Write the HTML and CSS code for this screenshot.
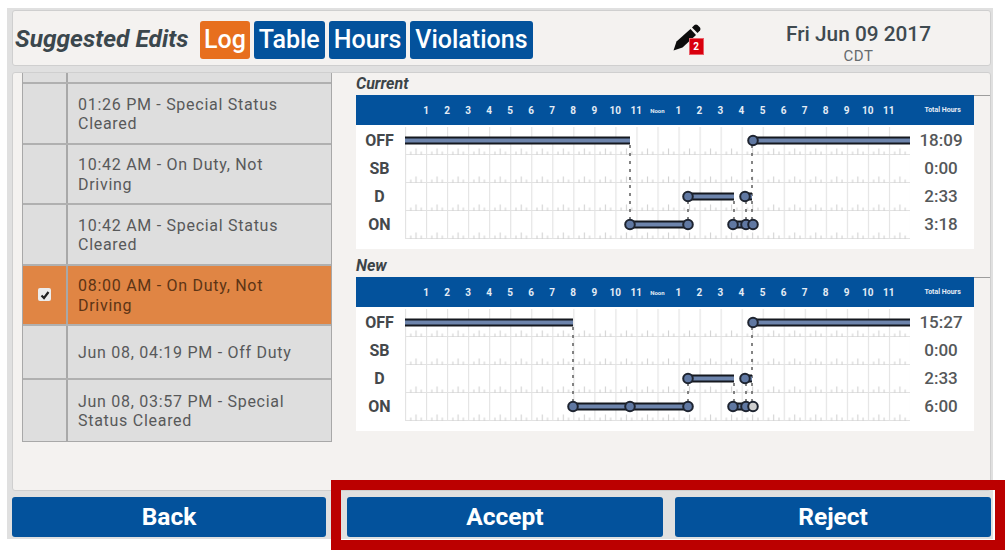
FILE: index.html
```html
<!DOCTYPE html>
<html lang="en">
<head>
<meta charset="utf-8">
<title>Suggested Edits</title>
<link rel="stylesheet" href="styles.css">
</head>
<body>
<div class="app">
  <header class="panel top">
    <h1 class="title">Suggested Edits</h1>
    <nav class="tabs">
      <span class="tab active">Log</span>
      <span class="tab table">Table</span>
      <span class="tab wide">Hours</span>
      <span class="tab wide">Violations</span>
    </nav>
    <div class="edit-icon">
      <svg width="30" height="30" viewBox="0 0 30 30">
        <path class="pencil-body" d="M1.5 27.5 L4.5 18.5 L18.5 6 L24 12 L10.5 24.5 Z"/>
        <path class="pencil-cap" d="M20 4.5 L22.5 2 Q24 1 25.5 2 L28 4.5 Q29 6 28 7.5 L25.5 10 Z"/>
      </svg>
      <span class="badge">2</span>
    </div>
    <div class="date">
      <div class="date-main">Fri Jun 09 2017</div>
      <div class="date-zone">CDT</div>
    </div>
  </header>

  <main class="panel content">
    <div class="list">
      <div class="row stub"><div class="check"></div><div class="text"></div></div>
      <div class="row"><div class="check"></div><div class="text">01:26 PM - Special Status Cleared</div></div>
      <div class="row"><div class="check"></div><div class="text">10:42 AM - On Duty, Not Driving</div></div>
      <div class="row"><div class="check"></div><div class="text">10:42 AM - Special Status Cleared</div></div>
      <div class="row selected">
        <div class="check">
          <span class="checkbox">
            <svg width="10" height="10" viewBox="0 0 10 10"><path class="tick" d="M1.5 5.5 L4 8 L8.5 2"/></svg>
          </span>
        </div>
        <div class="text">08:00 AM - On Duty, Not Driving</div>
      </div>
      <div class="row short"><div class="check"></div><div class="text">Jun 08, 04:19 PM - Off Duty</div></div>
      <div class="row"><div class="check"></div><div class="text">Jun 08, 03:57 PM - Special Status Cleared</div></div>
    </div>

    <div class="charts">
      <section class="chart">
        <div class="chart-label first">Current</div>
        <div class="head-rule">
          <div class="hours">
            <span>1</span><span>2</span><span>3</span><span>4</span><span>5</span><span>6</span><span>7</span><span>8</span><span>9</span><span>10</span><span>11</span><span class="noon">Noon</span><span>1</span><span>2</span><span>3</span><span>4</span><span>5</span><span>6</span><span>7</span><span>8</span><span>9</span><span>10</span><span>11</span><span class="total">Total Hours</span>
          </div>
        </div>
        <div class="body">
          <div class="states"><span>OFF</span><span>SB</span><span>D</span><span>ON</span></div>
          <svg class="graph" width="505" height="112" viewBox="0 0 505 112">
            <defs>
              <pattern id="grid-a" width="21.04" height="28" patternUnits="userSpaceOnUse">
                <path class="grid-line" d="M0.5 0V28M0 27.5H21.04"/>
                <path class="grid-tick" d="M5.76 28V24.5M11.02 28V21.5M16.28 28V24.5"/>
              </pattern>
            </defs>
            <rect width="505" height="112" fill="url(#grid-a)"/>
            <path class="dash" d="M225 18V97M283 74V97M329 74V97M341 74V97M347 18V97"/>
            <path class="bar-out" d="M0 13.5H225M348 13.5H505M283 69.5H329M340 69.5H347M225 97.5H283M328 97.5H348"/>
            <path class="bar-in" d="M0 13.5H225M348 13.5H505M283 69.5H329M340 69.5H347M225 97.5H283M328 97.5H348"/>
            <circle class="dot" cx="348" cy="13.5" r="4.8"/>
            <circle class="dot" cx="283" cy="69.5" r="4.8"/>
            <circle class="dot" cx="340" cy="69.5" r="4.8"/>
            <circle class="dot" cx="225" cy="97.5" r="4.8"/>
            <circle class="dot" cx="283" cy="97.5" r="4.8"/>
            <circle class="dot" cx="328" cy="97.5" r="4.8"/>
            <circle class="dot" cx="341" cy="97.5" r="4.8"/>
            <circle class="dot" cx="348" cy="97.5" r="4.8"/>
          </svg>
          <div class="totals"><span>18:09</span><span>0:00</span><span>2:33</span><span>3:18</span></div>
        </div>
      </section>

      <section class="chart">
        <div class="chart-label">New</div>
        <div class="head-rule">
          <div class="hours">
            <span>1</span><span>2</span><span>3</span><span>4</span><span>5</span><span>6</span><span>7</span><span>8</span><span>9</span><span>10</span><span>11</span><span class="noon">Noon</span><span>1</span><span>2</span><span>3</span><span>4</span><span>5</span><span>6</span><span>7</span><span>8</span><span>9</span><span>10</span><span>11</span><span class="total">Total Hours</span>
          </div>
        </div>
        <div class="body">
          <div class="states"><span>OFF</span><span>SB</span><span>D</span><span>ON</span></div>
          <svg class="graph" width="505" height="112" viewBox="0 0 505 112">
            <defs>
              <pattern id="grid-b" width="21.04" height="28" patternUnits="userSpaceOnUse">
                <path class="grid-line" d="M0.5 0V28M0 27.5H21.04"/>
                <path class="grid-tick" d="M5.76 28V24.5M11.02 28V21.5M16.28 28V24.5"/>
              </pattern>
            </defs>
            <rect width="505" height="112" fill="url(#grid-b)"/>
            <path class="dash" d="M168 18V97M283 74V97M329 74V97M341 74V97M347 18V97"/>
            <path class="bar-out" d="M0 13.5H168M348 13.5H505M283 69.5H329M340 69.5H347M168 97.5H283M328 97.5H348"/>
            <path class="bar-in" d="M0 13.5H168M348 13.5H505M283 69.5H329M340 69.5H347M168 97.5H283M328 97.5H348"/>
            <circle class="dot" cx="348" cy="13.5" r="4.8"/>
            <circle class="dot" cx="283" cy="69.5" r="4.8"/>
            <circle class="dot" cx="340" cy="69.5" r="4.8"/>
            <circle class="dot" cx="168" cy="97.5" r="4.8"/>
            <circle class="dot" cx="225" cy="97.5" r="4.8"/>
            <circle class="dot" cx="283" cy="97.5" r="4.8"/>
            <circle class="dot" cx="328" cy="97.5" r="4.8"/>
            <circle class="dot" cx="341" cy="97.5" r="4.8"/>
            <circle class="dot pale" cx="348" cy="97.5" r="4.8"/>
          </svg>
          <div class="totals"><span>15:27</span><span>0:00</span><span>2:33</span><span>6:00</span></div>
        </div>
      </section>
    </div>
  </main>

  <footer class="actions">
    <button class="action back">Back</button>
    <button class="action accept">Accept</button>
    <button class="action reject">Reject</button>
  </footer>
  <div class="highlight"></div>
</div>
</body>
</html>
```
FILE: styles.css
```css
* { box-sizing: border-box; }
html, body { margin: 0; padding: 0; background: #fff; }
body { width: 1007px; height: 557px; overflow: hidden; font-family: Roboto, "Liberation Sans", sans-serif; }

.app {
  position: relative;
  width: 986px;
  height: 531px;
  margin: 8px 0 0 7px;
  padding: 2px 2px 2px 5px;
  background: #e0e0e0;
  display: flex;
  flex-direction: column;
}

.panel {
  background: #f4f2f0;
  border: 1px solid #cfcfcf;
  border-radius: 3px;
}

.top {
  height: 56px;
  display: flex;
  align-items: center;
  padding-left: 2px;
}

.title {
  margin: 0;
  width: 185px;
  font-size: 24.5px;
  font-weight: 700;
  font-style: italic;
  color: #3b474d;
  white-space: nowrap;
}

.tabs { display: flex; gap: 4px; height: 38px; margin-top: 3px; }
.tab {
  display: flex;
  align-items: center;
  justify-content: center;
  height: 38px;
  padding: 0 4px;
  background: #03529c;
  border-radius: 3px;
  color: #fff;
  font-size: 25px;
  font-weight: 500;
}
.tab.table { padding: 0 5px; }
.tab.wide { padding: 0 5px; }
.tab.active { background: #e76f1e; }

.edit-icon { position: relative; width: 33px; height: 36px; margin-left: 139px; margin-top: 6px; }
.pencil-body, .pencil-cap { fill: #0c0c0c; }
.badge {
  position: absolute;
  left: 17px;
  top: 15px;
  width: 15px;
  height: 17px;
  background: #d9000d;
  border: 1px solid #e9606a;
  color: #fff;
  font-size: 10px;
  font-weight: 700;
  line-height: 15px;
  text-align: center;
}

.date { width: 174px; margin-left: 67px; text-align: center; }
.date-main { font-size: 20.8px; font-weight: 500; color: #3f4a50; line-height: 26px; margin-top: 10px; }
.date-zone { font-size: 15px; color: #666b6e; line-height: 17px; letter-spacing: 0.5px; margin-top: 1px; }

.content {
  height: 419px;
  margin-top: 6px;
  display: flex;
  align-items: flex-start;
  padding-left: 9px;
  overflow: hidden;
}

.list { width: 310px; background: #dedede; border: 1px solid #a8a8a8; border-top: 0; flex: none; }
.row { display: flex; height: 60.5px; border-bottom: 2px solid #b0b0b0; }
.row:last-child { border-bottom: 0; }
.row.stub { height: 11px; }
.row.short { height: 54px; }
.row.selected { background: #e08544; }
.check {
  width: 45px;
  flex: none;
  display: flex;
  align-items: center;
  justify-content: center;
  border-right: 2px solid #a8a8a8;
}
.checkbox {
  width: 13px;
  height: 13px;
  background: #ececec;
  border-radius: 2px;
  display: flex;
  align-items: center;
  justify-content: center;
}
.tick { fill: none; stroke: #222; stroke-width: 2.2; }
.text {
  flex: none;
  width: 232px;
  margin-top: 2px;
  padding: 0 5px 0 10px;
  align-self: center;
  font-size: 16px;
  line-height: 19.5px;
  letter-spacing: 0.72px;
  color: #58595a;
}
.row.selected .text { color: #5c3415; }

.charts { flex: 1; margin-left: 24px; }
.chart-label {
  height: 28px;
  padding-top: 8px;
  font-size: 16px;
  line-height: 18px;
  font-weight: 700;
  font-style: italic;
  color: #3c4448;
}
.chart-label.first { height: 22px; padding-top: 2px; }

.head-rule { border-top: 1px solid #9d9d9d; }
.hours {
  width: 618px;
  height: 30px;
  margin-top: -1px;
  padding-left: 59.5px;
  background: #03529c;
  display: grid;
  grid-template-columns: repeat(23, 21.04px) 1fr;
  align-items: center;
  color: #e4ecf5;
  font-size: 10px;
  font-weight: 700;
  text-align: center;
}
.hours .noon { font-size: 6px; }
.hours .total { font-size: 7px; padding-left: 12px; }

.body { width: 618px; height: 124px; background: #fff; padding-top: 2px; display: flex; align-items: flex-start; }
.states, .totals { display: flex; flex-direction: column; }
.states { width: 49px; padding-right: 2px; text-align: center; font-size: 16px; font-weight: 700; color: #44484b; }
.states span, .totals span { height: 28px; line-height: 27px; }
.totals { flex: 1; padding-right: 2px; text-align: center; font-size: 17px; font-weight: 500; color: #55585a; }

.graph { display: block; flex: none; }
.grid-line { fill: none; stroke: #e2e2e2; stroke-width: 1.2; }
.grid-tick { fill: none; stroke: #d2d2d2; stroke-width: 1.1; }
.dash { fill: none; stroke: #666; stroke-width: 1.6; stroke-dasharray: 3 5; }
.bar-out { fill: none; stroke: #15181f; stroke-width: 8; }
.bar-in { fill: none; stroke: #6d84ac; stroke-width: 4; }
.dot { fill: #6078a2; stroke: #1e2430; stroke-width: 2; }
.dot.pale { fill: #cfcfcf; }

.actions { display: flex; margin-top: 6px; height: 40px; }
.action {
  height: 40px;
  width: 316px;
  border: 0;
  border-radius: 3px;
  background: #03529c;
  color: #fff;
  font-family: inherit;
  font-size: 24.5px;
  font-weight: 700;
  padding: 0 0 2px;
}
.action.back { width: 314px; }
.action.accept { margin-left: 21px; }
.action.reject { margin-left: 12px; }

.highlight {
  position: absolute;
  left: 324px;
  top: 472px;
  width: 674px;
  height: 70px;
  border: solid #bb0000;
  border-width: 10px;
  pointer-events: none;
}
```
